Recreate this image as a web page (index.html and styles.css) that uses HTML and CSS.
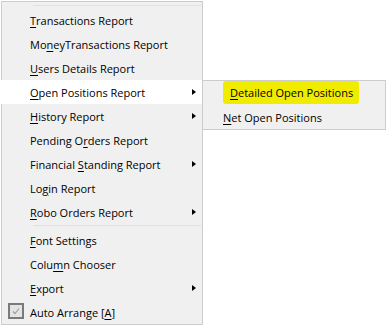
FILE: index.html
```html
<!DOCTYPE html>
<html lang="en">
<head>
    <meta charset="UTF-8">
    <title>Report Menu</title>
    <link rel="stylesheet" href="styles.css">
</head>
<body>
    <div class="menu">
        <div class="sep"></div>
        <div class="item"><span><u>T</u>ransactions Report</span></div>
        <div class="item"><span>Mo<u>n</u>eyTransactions Report</span></div>
        <div class="item"><span><u>U</u>sers Details Report</span></div>
        <div class="item active"><span><u>O</u>pen Positions Report</span><i class="arrow"></i></div>
        <div class="item"><span><u>H</u>istory Report</span><i class="arrow"></i></div>
        <div class="item"><span>Pending O<u>r</u>ders Report</span></div>
        <div class="item"><span>Financial <u>S</u>tanding Report</span><i class="arrow"></i></div>
        <div class="item"><span>Lo<u>g</u>in Report</span></div>
        <div class="item"><span><u>R</u>obo Orders Report</span><i class="arrow"></i></div>
        <div class="sep sep-mid"></div>
        <div class="item"><span><u>F</u>ont Settings</span></div>
        <div class="item"><span>Colu<u>m</u>n Chooser</span></div>
        <div class="item"><span><u>E</u>xport</span><i class="arrow"></i></div>
        <div class="item">
            <svg class="check" width="16" height="16" viewBox="0 0 16 16">
                <rect x="1" y="1" width="14" height="14" fill="#e4e4e4" stroke="#7a7a7a" stroke-width="2"/>
                <path d="M5 8.5 L7 10.5 L11 5.5" fill="none" stroke="#a0a0a0" stroke-width="1.2"/>
            </svg>
            <span>Auto Arrange [<u>A</u>]</span>
        </div>
    </div>

    <!-- submenu of Open Positions Report -->
    <div class="submenu">
        <div class="item"><span class="mark"><u>D</u>etailed Open Positions</span></div>
        <div class="item"><span><u>N</u>et Open Positions</span></div>
    </div>
</body>
</html>
```

FILE: styles.css
```css
body {
    margin: 0;
    background: #fff;
    font-family: "Open Sans", "Noto Sans", sans-serif;
    font-size: 11px;
    color: #000;
}

/* Main menu */
.menu {
    margin: 1px;
    width: 202px;
    height: 324px;
    box-sizing: border-box;
    border: 1px solid #cccccc;
    background: #f0f0f0;
    padding: 0 1px;
}

.sep {
    height: 1px;
    margin: 3px 0 2px 30px;
    background: #e0e0e0;
}

.sep-mid {
    margin: 1px 0 2px 30px;
}

.item {
    position: relative;
    display: flex;
    align-items: center;
    height: 24px;
    padding-left: 27px;
}

.item u {
    text-decoration-thickness: 1px;
    text-underline-offset: 2px;
}

.item.active {
    background: #fff;
    margin: 0 -2px 0 -2px;
    padding-left: 29px;
}

.arrow {
    position: absolute;
    right: 5px;
    top: 8.5px;
    width: 0;
    height: 0;
    border-left: 4px solid #000;
    border-top: 3.5px solid transparent;
    border-bottom: 3.5px solid transparent;
}

.item.active .arrow {
    right: 7px;
}

.check {
    position: absolute;
    left: 5px;
    top: 3px;
}

/* Submenu */
.submenu {
    position: absolute;
    left: 202px;
    top: 80px;
    width: 184px;
    box-sizing: border-box;
    border: 1px solid #cccccc;
    background: #f0f0f0;
}

.submenu .item {
    padding-left: 20px;
}

.mark {
    background: #f0ec00;
    border-radius: 3px;
    height: 23px;
    line-height: 23px;
    padding: 0 6px 0 7px;
    margin-top: -1px;
}
```
